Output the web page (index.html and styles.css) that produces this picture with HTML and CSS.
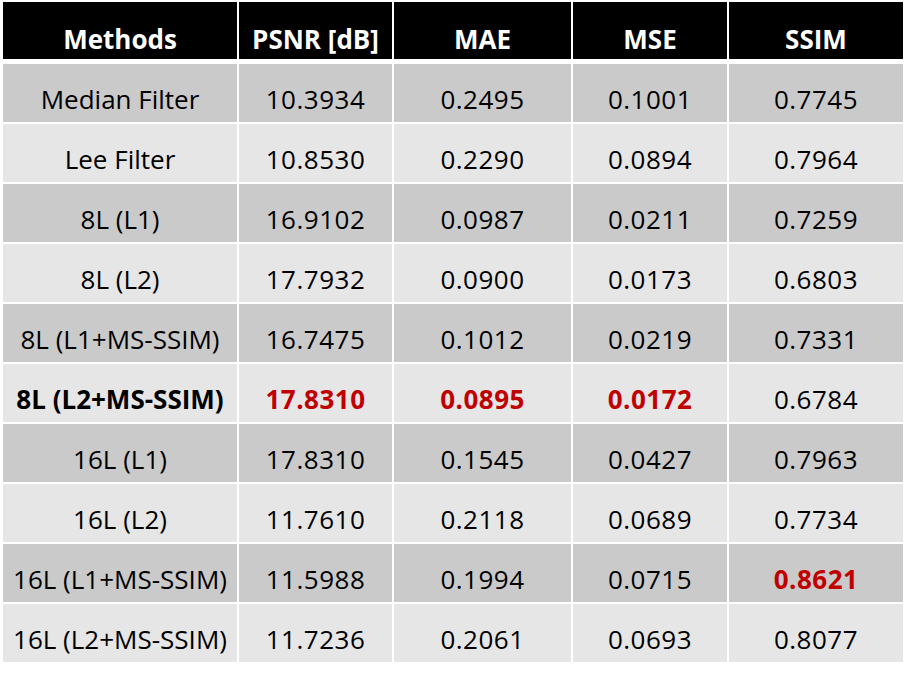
FILE: index.html
```html
<!DOCTYPE html>
<html>
<head>
<meta charset="utf-8">
<link rel="stylesheet" href="styles.css">
</head>
<body>
<div class="table">
  <div class="grid head">
    <div class="cell">Methods</div>
    <div class="cell">PSNR [dB]</div>
    <div class="cell">MAE</div>
    <div class="cell">MSE</div>
    <div class="cell">SSIM</div>
  </div>
  <div class="grid body">
    <div class="cell dark">Median Filter</div><div class="cell num dark">10.3934</div><div class="cell num dark">0.2495</div><div class="cell num dark">0.1001</div><div class="cell num dark">0.7745</div>
    <div class="cell light">Lee Filter</div><div class="cell num light">10.8530</div><div class="cell num light">0.2290</div><div class="cell num light">0.0894</div><div class="cell num light">0.7964</div>
    <div class="cell dark">8L (L1)</div><div class="cell num dark">16.9102</div><div class="cell num dark">0.0987</div><div class="cell num dark">0.0211</div><div class="cell num dark">0.7259</div>
    <div class="cell light">8L (L2)</div><div class="cell num light">17.7932</div><div class="cell num light">0.0900</div><div class="cell num light">0.0173</div><div class="cell num light">0.6803</div>
    <div class="cell dark">8L (L1+MS-SSIM)</div><div class="cell num dark">16.7475</div><div class="cell num dark">0.1012</div><div class="cell num dark">0.0219</div><div class="cell num dark">0.7331</div>
    <div class="cell light bold">8L (L2+MS-SSIM)</div><div class="cell num light best">17.8310</div><div class="cell num light best">0.0895</div><div class="cell num light best">0.0172</div><div class="cell num light">0.6784</div>
    <div class="cell dark">16L (L1)</div><div class="cell num dark">17.8310</div><div class="cell num dark">0.1545</div><div class="cell num dark">0.0427</div><div class="cell num dark">0.7963</div>
    <div class="cell light">16L (L2)</div><div class="cell num light">11.7610</div><div class="cell num light">0.2118</div><div class="cell num light">0.0689</div><div class="cell num light">0.7734</div>
    <div class="cell dark">16L (L1+MS-SSIM)</div><div class="cell num dark">11.5988</div><div class="cell num dark">0.1994</div><div class="cell num dark">0.0715</div><div class="cell num dark best">0.8621</div>
    <div class="cell light">16L (L2+MS-SSIM)</div><div class="cell num light">11.7236</div><div class="cell num light">0.2061</div><div class="cell num light">0.0693</div><div class="cell num light">0.8077</div>
  </div>
</div>
</body>
</html>
```
FILE: styles.css
```css
html, body {
  margin: 0;
  padding: 0;
  background: #ffffff;
}
body {
  font-family: "Open Sans", "Noto Sans", sans-serif;
  font-size: 26px;
  color: #000000;
}
.table {
  padding: 2px 0 0 3px;
  display: flex;
  flex-direction: column;
  gap: 5px;
}
.grid {
  display: grid;
  grid-template-columns: 234px 153px 177px 154px 174px;
  column-gap: 2px;
  row-gap: 2px;
}
.head {
  grid-template-rows: 57px;
}
.body {
  grid-auto-rows: 58px;
}
.cell {
  display: flex;
  align-items: center;
  justify-content: center;
  padding-top: 12px;
  box-sizing: border-box;
  white-space: nowrap;
  line-height: 1;
}
.num {
  letter-spacing: 0.5px;
}
.head .cell {
  background: #000000;
  color: #ffffff;
  font-weight: 700;
  padding-top: 17px;
}
.dark { background: #cacaca; }
.light { background: #e6e6e6; }
.bold { font-weight: 700; }
.best { font-weight: 700; color: #c00000; }
```
